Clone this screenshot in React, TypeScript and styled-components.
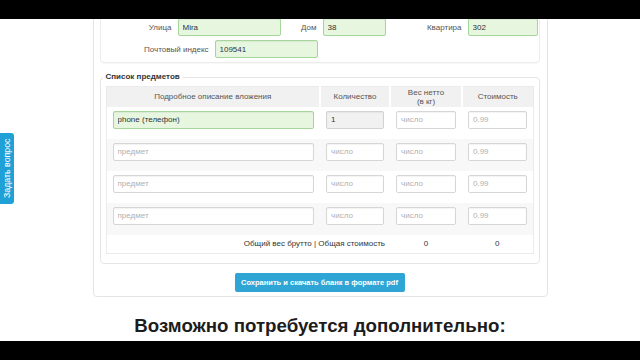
import React from "react";
import styled, { createGlobalStyle } from "styled-components";

const GlobalStyle = createGlobalStyle`
  html, body {
    margin: 0;
    padding: 0;
    background: #fff;
  }
  body {
    font-family: "Liberation Sans", Arial, sans-serif;
    color: #333;
  }
  * {
    box-sizing: border-box;
  }
`;

interface Item {
  name: string;
  qty: string;
  weight: string;
  price: string;
}

const items: Item[] = [
  { name: "phone (телефон)", qty: "1", weight: "", price: "" },
  { name: "", qty: "", weight: "", price: "" },
  { name: "", qty: "", weight: "", price: "" },
  { name: "", qty: "", weight: "", price: "" },
];

const App: React.FC = () => {
  return (
    <Screen>
      <GlobalStyle />
      <TopBar />
      <Viewport>
        <Page>
          <Card>
            <AddressCard>
              <AddressRow>
                <Label $w={78}>Улица</Label>
                <Field $w={103} $ok defaultValue="Mira" readOnly />
                <Label $w={42}>Дом</Label>
                <Field $w={63} $ok defaultValue="38" readOnly />
                <Label $w={82}>Квартира</Label>
                <Field $w={70} $ok defaultValue="302" readOnly />
              </AddressRow>
              <AddressRow>
                <Label $w={115}>Почтовый индекс</Label>
                <Field $w={103} $ok defaultValue="109541" readOnly />
              </AddressRow>
            </AddressCard>

            <ItemsSet>
              <Legend>Список предметов</Legend>
              <ItemsTable>
                <colgroup>
                  <col style={{ width: 214 }} />
                  <col style={{ width: 70 }} />
                  <col style={{ width: 72 }} />
                  <col style={{ width: 71 }} />
                </colgroup>
                <tbody>
                  <HeadRow>
                    <HeadCell>Подробное описание вложения</HeadCell>
                    <HeadCell>Количество</HeadCell>
                    <HeadCell>
                      Вес нетто
                      <br />
                      (в кг)
                    </HeadCell>
                    <HeadCell>Стоимость</HeadCell>
                  </HeadRow>
                  {items.map((item, i) => (
                    <ItemRow key={i} $striped={i % 2 === 1}>
                      <Cell>
                        <Field
                          $ok={!!item.name}
                          defaultValue={item.name}
                          placeholder="предмет"
                          readOnly
                        />
                      </Cell>
                      <Cell>
                        <Field
                          $locked={!!item.qty}
                          defaultValue={item.qty}
                          placeholder="число"
                          readOnly
                        />
                      </Cell>
                      <Cell>
                        <Field defaultValue={item.weight} placeholder="число" readOnly />
                      </Cell>
                      <Cell>
                        <Field defaultValue={item.price} placeholder="0.99" readOnly />
                      </Cell>
                    </ItemRow>
                  ))}
                  <TotalRow>
                    <TotalLabel colSpan={2}>Общий вес брутто | Общая стоимость</TotalLabel>
                    <TotalValue>0</TotalValue>
                    <TotalValue>0</TotalValue>
                  </TotalRow>
                </tbody>
              </ItemsTable>
            </ItemsSet>

            <SaveButton type="button">Сохранить и скачать бланк в формате pdf</SaveButton>
          </Card>

          <Heading>Возможно потребуется дополнительно:</Heading>
        </Page>
      </Viewport>
      <BottomBar />
      <AskTab>Задать вопрос</AskTab>
    </Screen>
  );
};

export default App;

// Styled Components
const Screen = styled.div`
  position: relative;
  width: 640px;
  height: 360px;
  overflow: hidden;
  display: flex;
  flex-direction: column;
  background: #fff;
`;

const TopBar = styled.div`
  height: 19px;
  flex: none;
  background: #000;
`;

const BottomBar = styled.div`
  height: 19px;
  flex: none;
  background: #000;
`;

const Viewport = styled.div`
  flex: 1;
  overflow: hidden;
`;

const Page = styled.div`
  margin-top: -15px;
  display: flex;
  flex-direction: column;
  align-items: center;
`;

const Card = styled.div`
  width: 455px;
  border: 1px solid #e4e4e4;
  border-radius: 4px;
  padding: 6px 7px 4px 6px;
  display: flex;
  flex-direction: column;
  align-items: stretch;
`;

const AddressCard = styled.div`
  border: 1px solid #ececec;
  border-radius: 4px;
  padding: 6px 0 4px;
  display: flex;
  flex-direction: column;
  gap: 4px;
  box-shadow: 0 1px 1px rgba(0, 0, 0, 0.03);
`;

const AddressRow = styled.div`
  display: flex;
  align-items: center;
  margin-left: -1px;
`;

const Label = styled.label<{ $w: number }>`
  width: ${(p) => p.$w}px;
  flex: none;
  padding-right: 6px;
  text-align: right;
  font-size: 8px;
  color: #555;
`;

const Field = styled.input<{ $w?: number; $ok?: boolean; $locked?: boolean }>`
  display: block;
  width: ${(p) => (p.$w ? `${p.$w}px` : "100%")};
  flex: none;
  height: 18px;
  padding: 0 4px;
  font-family: "Liberation Sans", Arial, sans-serif;
  font-size: 8px;
  color: #333;
  border-radius: 2px;
  outline: none;
  border: 1px solid
    ${(p) => (p.$ok ? "#a5d69a" : p.$locked ? "#d2d2d2" : "#d6d6d6")};
  background: ${(p) => (p.$ok ? "#e6f6df" : p.$locked ? "#f1f1f1" : "#fff")};
  box-shadow: inset 0 1px 1px rgba(0, 0, 0, 0.05);

  &::placeholder {
    color: #b0b0b0;
  }
`;

const ItemsSet = styled.fieldset`
  margin: 9px 0 0;
  border: 1px solid #e6e6e6;
  border-radius: 4px;
  padding: 4px 6px 9px 5px;
  min-width: 0;
`;

const Legend = styled.legend`
  font-size: 8px;
  font-weight: bold;
  color: #333;
  padding: 0 3px;
  margin-left: -3px;
  line-height: 10px;
`;

const ItemsTable = styled.table`
  width: 427px;
  border-collapse: collapse;
  table-layout: fixed;
  border: 1px solid #ebebeb;
`;

const HeadRow = styled.tr`
  background: #f1f1f1;
`;

const HeadCell = styled.td`
  height: 20px;
  padding: 0 4px;
  text-align: center;
  vertical-align: middle;
  font-size: 8px;
  line-height: 9px;
  color: #555;
  border-right: 2px solid #fff;

  &:last-child {
    border-right: none;
  }
`;

const ItemRow = styled.tr<{ $striped: boolean }>`
  background: ${(p) => (p.$striped ? "#f8f8f8" : "#fff")};
`;

const Cell = styled.td`
  padding: 4px 6px 10px;
  vertical-align: top;
`;

const TotalRow = styled.tr`
  background: #fff;
`;

const TotalLabel = styled.td`
  height: 19px;
  padding: 0 5px 0 0;
  text-align: right;
  font-size: 8px;
  color: #333;
  vertical-align: middle;
`;

const TotalValue = styled.td`
  text-align: center;
  font-size: 8px;
  color: #333;
  vertical-align: middle;
`;

const SaveButton = styled.button`
  align-self: center;
  margin-top: 9px;
  width: 170px;
  height: 19px;
  padding: 0;
  border: none;
  border-radius: 2px;
  background: #2ea5d4;
  color: #fff;
  font-family: "Liberation Sans", Arial, sans-serif;
  font-size: 7.5px;
  font-weight: bold;
  cursor: pointer;
`;

const Heading = styled.h2`
  margin: 18px 0 0;
  font-size: 18.7px;
  line-height: 22px;
  font-weight: bold;
  color: #1c1c1c;
  text-align: center;
`;

const AskTab = styled.div`
  position: absolute;
  left: 0;
  top: 133px;
  width: 14px;
  height: 71px;
  background: #1fa0d6;
  border-radius: 3px 0 0 3px;
  display: flex;
  align-items: center;
  justify-content: center;
  writing-mode: vertical-rl;
  transform: rotate(180deg);
  color: #fff;
  font-size: 8.8px;
  line-height: 14px;
  white-space: nowrap;
`;
